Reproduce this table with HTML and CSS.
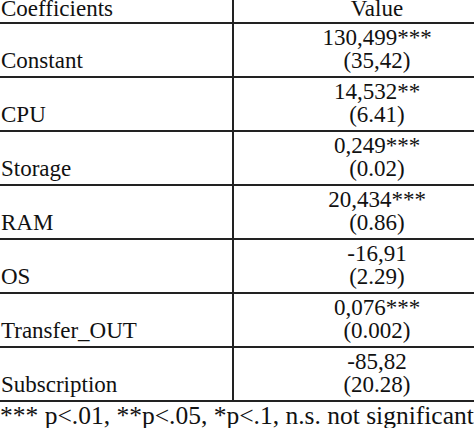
FILE: index.html
```html
<!DOCTYPE html>
<html>
<head>
<meta charset="utf-8">
<link rel="stylesheet" href="styles.css">
</head>
<body>
<div class="sheet">
  <div class="row head">
    <div class="name">Coefficients</div>
    <div class="value">Value</div>
  </div>
  <div class="row">
    <div class="name">Constant</div>
    <div class="value">130,499***<br>(35,42)</div>
  </div>
  <div class="row">
    <div class="name">CPU</div>
    <div class="value">14,532**<br>(6.41)</div>
  </div>
  <div class="row">
    <div class="name">Storage</div>
    <div class="value">0,249***<br>(0.02)</div>
  </div>
  <div class="row">
    <div class="name">RAM</div>
    <div class="value">20,434***<br>(0.86)</div>
  </div>
  <div class="row">
    <div class="name">OS</div>
    <div class="value">-16,91<br>(2.29)</div>
  </div>
  <div class="row">
    <div class="name">Transfer_OUT</div>
    <div class="value">0,076***<br>(0.002)</div>
  </div>
  <div class="row">
    <div class="name">Subscription</div>
    <div class="value">-85,82<br>(20.28)</div>
  </div>
  <div class="note">*** p&lt;.01, **p&lt;.05, *p&lt;.1, n.s. not significant</div>
</div>
</body>
</html>
```
FILE: styles.css
```css
html, body {
  margin: 0;
  padding: 0;
  background: #fff;
  overflow: hidden;
}
.sheet {
  width: 520px;
  margin-top: -5px;
  font-family: "Liberation Serif", "Times New Roman", serif;
  font-size: 23px;
  line-height: 23px;
  color: #111;
}
.row {
  display: grid;
  grid-template-columns: 234px 286px;
  border-bottom: 2px solid #222;
}
.row > div {
  box-sizing: border-box;
  padding: 2px 0 4px;
}
.row.head > div {
  padding: 2px 0 2px;
}
.name {
  border-right: 2px solid #222;
  padding-left: 1px !important;
  display: flex;
  align-items: flex-end;
}
.value {
  text-align: center;
}
.note {
  font-size: 25.5px;
  line-height: 25px;
  white-space: nowrap;
  margin-top: 1px;
}
```
